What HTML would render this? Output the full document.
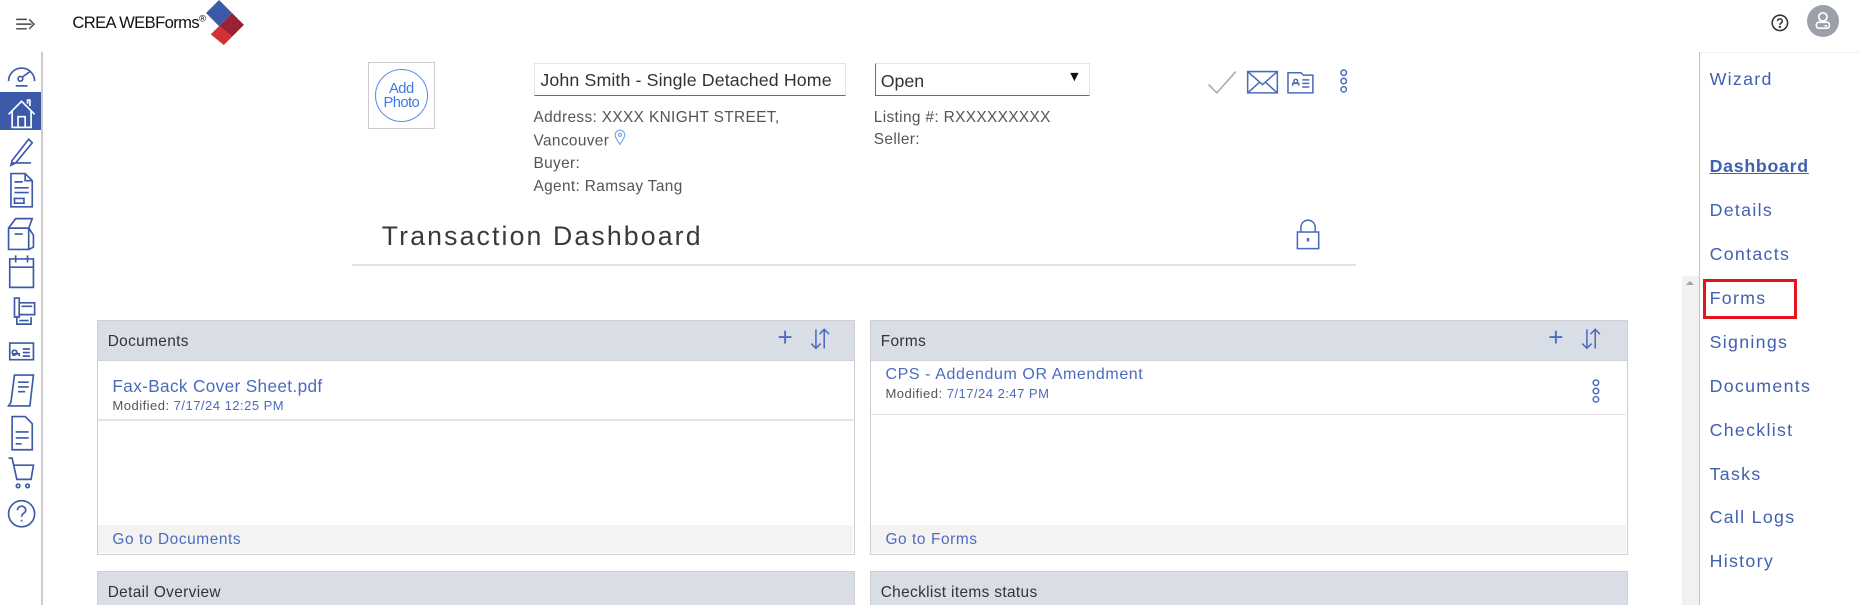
<!DOCTYPE html>
<html><head><meta charset="utf-8"><style>
*{margin:0;padding:0;box-sizing:border-box}
html,body{width:1859px;height:605px;overflow:hidden;background:#fff}
#w{width:1568px;height:511px;position:relative;zoom:1.18559;font-family:"Liberation Sans",sans-serif;color:#555}
.a{position:absolute}
.nav a{position:absolute;left:1442px;font-size:15px;color:#4060b0;letter-spacing:1.1px;text-decoration:none;line-height:18px}
.t{font-size:13px;color:#555;letter-spacing:.3px;line-height:19px}
.panel{position:absolute;border:1px solid #cfcfcf;background:#fff}
.ph{height:34px;background:#d9dde5;border-bottom:1px solid #cfd3da;font-size:13px;color:#333;padding:10px 8px;letter-spacing:.3px}
.lnk{color:#4a6cc0}
</style></head><body><div id="w">
<svg class="a" style="left:13px;top:14px" width="18" height="12" viewBox="0 0 18 12" fill="none" stroke="#444" stroke-width="1.2"><path d="M1 2h9M1 6h13M1 10h9M12 2l4 4-4 4"/></svg>
<div class="a" style="left:61px;top:11px;font-size:14px;color:#111;letter-spacing:-.5px">CREA WEBForms<sup style="font-size:8px">®</sup></div>
<svg class="a" style="left:174px;top:0" width="32" height="38" viewBox="0 0 32 38"><path d="M11 0L22 11 11 22 0 11z" fill="#3d5aa8"/><path d="M22 11L32 21 22 31 11 22z" fill="#9b2232"/><path d="M11 22L22 31 15 38 4 29z" fill="#d23236"/></svg>
<svg class="a" style="left:1494px;top:12px" width="15" height="15" viewBox="0 0 15 15" fill="none" stroke="#333" stroke-width="1.3"><circle cx="7.5" cy="7.5" r="6.5"/><path d="M5.5 6c0-2.5 4-2.5 4 0 0 1.5-2 1.5-2 3.2"/><circle cx="7.5" cy="11" r=".4"/></svg>
<div class="a" style="left:1524px;top:4px;width:27px;height:27px;border-radius:50%;background:#9ba0aa"></div>
<svg class="a" style="left:1530px;top:9px" width="15" height="17" viewBox="0 0 15 17" fill="none" stroke="#fff" stroke-width="1.4"><circle cx="7.5" cy="5" r="3.5"/><rect x="2" y="9.5" width="11" height="5" rx="2"/><path d="M9 12.5h2"/></svg>
<div class="a" style="left:35px;top:44px;width:1px;height:470px;background:#ccc"></div>
<div class="a" style="left:0;top:78px;width:35px;height:32px;background:#3d5aa8"></div>
<svg class="a" style="left:4px;top:46px" width="28" height="420" viewBox="0 0 28 420" fill="none" stroke="#3d5aa8" stroke-width="1.4">
 <path d="M3 22a11 11 0 1 1 22 0"/><path d="M14 19l7-5"/><circle cx="13" cy="20" r="2"/><path d="M9 26h10"/>
 <g stroke="#fff"><path d="M3 50l11-11 11 11M6 47v14h16V47M11 61v-9h6v9M19 41v-3h2v5"/></g>
 <g transform="translate(0,-15)"><path d="M6 104l14-18 3 3-14 17-4 2zM6 106h16"/></g>
 <g transform="translate(0,-6)"><path d="M5 106v28h18v-22l-6-6zM17 106v6h6M8 113h7M8 118h12M8 122h12M8 127h8v4h-8z"/></g>
 <g transform="translate(0,-12)"><path d="M3 158v18h17v-18zM3 158l6-8h14l-3 8M20 158l4 6v10l-4 2M8 163h7"/></g>
 <g transform="translate(0,-18)"><path d="M4 190h20v24H4zM4 197h20M9 187v6M19 187v6"/></g>
 <g transform="translate(0,-5)"><path d="M8 210v16h4v-16zM12 214h13v10H12zM14 217h9M10 226v6h12v-6M12 229h8"/></g>
 <path d="M4 243h20v14H4zM7 254v-2h5v2M8 249a2 2 0 1 0 .1 0M15 248h6M15 251h6M15 254h6"/>
 <path d="M8 270h16l-3 26H3l2-3zM11 276h9M11 280h9M11 284h6"/>
 <g transform="translate(0,3)"><path d="M6 302v28h17v-22l-6-6zM9 315h11M9 320h11M9 325h5"/></g>
 <path d="M3 340h3l4 18h12l2-12H7M11 362a1.5 1.5 0 1 0 .1 0M19 362a1.5 1.5 0 1 0 .1 0"/>
 <circle cx="14" cy="387" r="11"/><path d="M10.5 384c0-4.5 7-4.5 7 0 0 2.5-3.5 2.5-3.5 5.5M14 392v1.5"/>
</svg>
<div class="a" style="left:310px;top:52px;width:57px;height:57px;border:1px solid #ccc"></div>
<div class="a" style="left:316px;top:58px;width:45px;height:45px;border:1px solid #5b8be6;border-radius:50%;color:#3f7ae8;font-size:12.5px;line-height:12px;text-align:center;padding-top:10px;letter-spacing:-.5px">Add<br>Photo</div>
<div class="a" style="left:450px;top:53px;width:264px;height:28px;border:1px solid #e2e5ee;border-bottom:1.5px solid #4a6cc0;font-size:15px;color:#333;padding:5px 5px;letter-spacing:.1px;white-space:nowrap">John Smith - Single Detached Home</div>
<div class="a" style="left:738px;top:53px;width:181px;height:28px;border:1px solid #e2e5ee;border-left:1.5px solid #4a6cc0;border-bottom:1.5px solid #4a6cc0;font-size:15px;color:#333;padding:6px 4px">Open<span style="position:absolute;right:6px;top:4px;font-size:12px;color:#111">▼</span></div>
<div class="a t" style="left:450px;top:90px">Address: XXXX KNIGHT STREET,<br>Vancouver <svg width="10" height="14" viewBox="0 0 10 14" fill="none" stroke="#7ba4ee"><path d="M5 13C2 9 1 7 1 5a4 4 0 0 1 8 0c0 2-1 4-4 8z"/><circle cx="5" cy="5" r="1.3"/></svg><br>Buyer:<br>Agent: Ramsay Tang</div>
<div class="a t" style="left:737px;top:90px">Listing #: RXXXXXXXXX<br>Seller:</div>
<svg class="a" style="left:1016px;top:57px" width="125" height="24" viewBox="0 0 125 24" fill="none" stroke-width="1.3">
 <path d="M3 14l7 7L26 3" stroke="#aaa"/>
 <path d="M36 3h25v18H36zM36 3l12.5 11L61 3M36 21l10-9M61 21l-10-9" stroke="#4a6cc0"/>
 <path d="M70 4h11l2 2h8v15H70zM74 15v-2h5v2M76.5 9.5a1.6 1.6 0 1 0 .1 0M82 10h6M82 13h6M82 16h6" stroke="#4a6cc0"/>
 <circle cx="117" cy="4" r="2.3" stroke="#4a6cc0"/><circle cx="117" cy="11" r="2.3" stroke="#4a6cc0"/><circle cx="117" cy="18" r="2.3" stroke="#4a6cc0"/>
</svg>
<div class="a" style="left:322px;top:186px;font-size:22.5px;color:#3a3a3a;letter-spacing:1.8px">Transaction Dashboard</div>
<div class="a" style="left:297px;top:223px;width:847px;height:1px;background:#e3e3e3"></div>
<svg class="a" style="left:1092px;top:185px" width="22" height="26" viewBox="0 0 22 26" fill="none" stroke="#4a6cc0" stroke-width="1.3"><path d="M5 11V7a6 6 0 0 1 12 0v4"/><rect x="2" y="11" width="18" height="14"/><path d="M11 16v3" stroke-width="2"/></svg>
<div class="a" style="left:1419px;top:233px;width:14px;height:280px;background:#f1f1f1"></div>
<div class="a" style="left:1422px;top:237px;width:0;height:0;border-left:4px solid transparent;border-right:4px solid transparent;border-bottom:4px solid #a3a3a3"></div>
<div class="a" style="left:1433px;top:44px;width:1px;height:470px;background:#b9c3de"></div>
<div class="a" style="left:1434px;top:44px;width:134px;height:1px;background:#f0f0f0"></div>
<div class="nav">
<a style="top:58px">Wizard</a>
<a style="top:132px;font-weight:bold;text-decoration:underline;letter-spacing:.6px">Dashboard</a>
<a style="top:169px">Details</a>
<a style="top:206px">Contacts</a>
<a style="top:243px">Forms</a>
<a style="top:280px">Signings</a>
<a style="top:317px">Documents</a>
<a style="top:354px">Checklist</a>
<a style="top:391px">Tasks</a>
<a style="top:428px">Call Logs</a>
<a style="top:465px">History</a>
</div>
<div class="a" style="left:1436px;top:235px;width:80px;height:34px;border:3px solid #e3141c"></div>
<div class="panel" style="left:82px;top:270px;width:639px;height:198px">
 <div class="ph">Documents</div>
 <div class="a" style="left:573px;top:1px;font-size:22px;color:#4a6cc0;font-weight:300">+</div>
 <svg class="a" style="left:600px;top:5px" width="18" height="20" viewBox="0 0 18 20" fill="none" stroke="#4a6cc0" stroke-width="1.3"><path d="M5 2v16M1 14l4 4 4-4M12 18V2M8 6l4-4 4 4"/></svg>
 <div class="a lnk" style="left:12px;top:46px;font-size:14.5px;letter-spacing:.3px">Fax-Back Cover Sheet.pdf</div>
 <div class="a" style="left:12px;top:65px;font-size:11px;letter-spacing:.4px;color:#555">Modified: <span class="lnk">7/17/24 12:25 PM</span></div>
 <div class="a" style="left:0;top:83px;width:637px;height:1px;background:#e3e3e3"></div>
 <div class="a" style="left:0;top:172px;width:637px;height:24px;background:#f4f3f2"></div>
 <div class="a lnk" style="left:12px;top:177px;font-size:13px;letter-spacing:.5px">Go to Documents</div>
</div>
<div class="panel" style="left:734px;top:270px;width:639px;height:198px">
 <div class="ph">Forms</div>
 <div class="a" style="left:571px;top:1px;font-size:22px;color:#4a6cc0;font-weight:300">+</div>
 <svg class="a" style="left:599px;top:5px" width="18" height="20" viewBox="0 0 18 20" fill="none" stroke="#4a6cc0" stroke-width="1.3"><path d="M5 2v16M1 14l4 4 4-4M12 18V2M8 6l4-4 4 4"/></svg>
 <div class="a lnk" style="left:12px;top:38px;font-size:13.5px;letter-spacing:.5px">CPS - Addendum OR Amendment</div>
 <div class="a" style="left:12px;top:55px;font-size:11px;letter-spacing:.4px;color:#555">Modified: <span class="lnk">7/17/24 2:47 PM</span></div>
 <svg class="a" style="left:606px;top:48px" width="10" height="22" viewBox="0 0 10 22" fill="none" stroke="#4a6cc0" stroke-width="1.3"><circle cx="5" cy="4" r="2.3"/><circle cx="5" cy="11" r="2.3"/><circle cx="5" cy="18" r="2.3"/></svg>
 <div class="a" style="left:0;top:78px;width:637px;height:1px;background:#e3e3e3"></div>
 <div class="a" style="left:0;top:172px;width:637px;height:24px;background:#f4f3f2"></div>
 <div class="a lnk" style="left:12px;top:177px;font-size:13px;letter-spacing:.5px">Go to Forms</div>
</div>
<div class="panel" style="left:82px;top:482px;width:639px;height:40px"><div class="ph">Detail Overview</div></div>
<div class="panel" style="left:734px;top:482px;width:639px;height:40px"><div class="ph">Checklist items status</div></div>
</div></body></html>
